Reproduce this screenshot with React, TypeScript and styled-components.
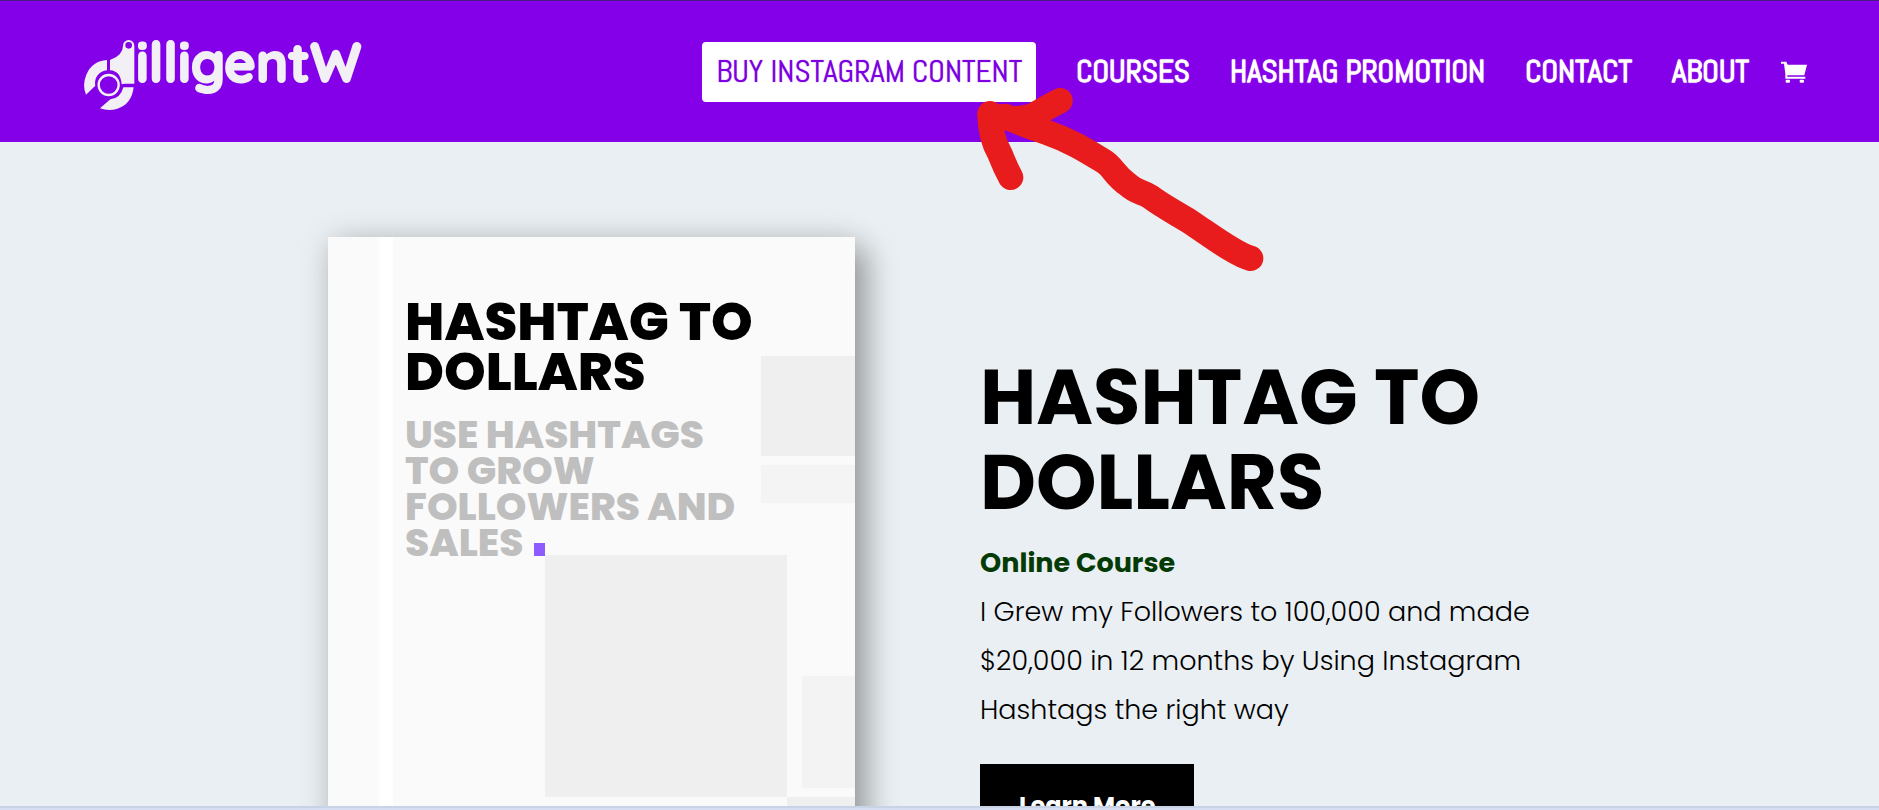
import React from 'react';
import styled, { createGlobalStyle } from 'styled-components';

const GlobalStyle = createGlobalStyle`
  * { box-sizing: border-box; }
  body {
    margin: 0;
    background: #e9eff2;
    color: #000;
    font-family: Poppins, Lato, sans-serif;
  }
  h1, h2, p { margin: 0; }
`;

const Page = styled.div`
  position: relative;
  display: flex;
  flex-direction: column;
  height: 100vh;
  overflow: hidden;
`;

const Header = styled.header`
  display: flex;
  flex: none;
  align-items: center;
  justify-content: space-between;
  padding: 41px 72px 40px 83px;
  background: #8300e9;
  border-top: 1px solid #4b1a86;
`;

const Logo = styled.a`
  display: flex;
  align-items: flex-start;
  gap: 1px;
  height: 60px;
  color: #f2f0f5;
  text-decoration: none;
`;

const LogoMark = styled.svg`
  flex: none;
  width: 52px;
  height: 72px;
  margin-top: -3px;
`;

const LogoName = styled.span`
  font: 700 54px/40px Quicksand, 'Varela Round', Lato, sans-serif;
  -webkit-text-stroke: 2px currentColor;
`;

const Nav = styled.nav`
  display: flex;
  align-items: center;
  gap: 40px;
`;

const NavLink = styled.a<{ $active?: boolean }>`
  padding: ${(p) => (p.$active ? '0 14px' : '0')};
  border-radius: 4px;
  background: ${(p) => (p.$active ? '#fff' : 'transparent')};
  color: ${(p) => (p.$active ? '#7d00df' : '#fff')};
  font-family: Abel, 'Roboto Condensed', sans-serif;
  font-size: 31px;
  font-weight: ${(p) => (p.$active ? 400 : 700)};
  line-height: 60px;
  text-decoration: none;
  text-shadow: 0 0 1px currentColor;
  white-space: nowrap;
`;

const CartLink = styled.a`
  display: flex;
  margin-left: -8px;
  color: #fff;
`;

const Hero = styled.main`
  display: grid;
  flex: 1;
  grid-template-columns: minmax(0, 527fr) minmax(0, 571fr);
  gap: 125px;
  align-items: start;
  width: 90%;
  max-width: 1223px;
  margin: 0 auto;
  padding-top: 95px;
`;

const Cover = styled.article`
  position: relative;
  min-height: 720px;
  padding: 60px 0 0 77px;
  background: #fafafa;
  box-shadow: 13px 13px 28px rgba(0, 0, 0, 0.3), 0 0 30px rgba(0, 0, 0, 0.12);
`;

const CoverArt = styled.svg`
  position: absolute;
  inset: 0;
  width: 100%;
  height: 720px;
`;

const CoverText = styled.div`
  position: relative;
  width: 360px;
`;

const CoverTitle = styled.h2`
  font-size: 53px;
  font-weight: 800;
  line-height: 50px;
  white-space: nowrap;
`;

const CoverSubtitle = styled.p`
  margin-top: 20px;
  color: #bfbfbf;
  font-size: 39px;
  font-weight: 800;
  line-height: 36px;
  white-space: nowrap;
`;

const Dot = styled.span`
  display: inline-block;
  width: 11px;
  height: 13px;
  margin-left: 11px;
  background: #8e5bff;
`;

const Intro = styled.section`
  padding-top: 118px;
`;

const Title = styled.h1`
  font-size: 77px;
  font-weight: 700;
  line-height: 85px;
`;

const Kicker = styled.p`
  margin-top: 13px;
  color: #043a04;
  font-size: 27px;
  font-weight: 700;
  line-height: 49px;
`;

const Lead = styled.p`
  font-size: 27px;
  font-weight: 300;
  line-height: 49px;
`;

const LearnMore = styled.button`
  margin-top: 30px;
  padding: 0 39px;
  border: 0;
  background: #000;
  color: #fff;
  font: 700 24px/84px Poppins, Lato, sans-serif;
`;

const BottomBar = styled.footer`
  position: absolute;
  inset: auto 0 0;
  height: 4px;
  background: #d6def4;
  border-top: 2px solid #c8d3e6;
`;

const Arrow = styled.svg`
  position: absolute;
  top: 70px;
  left: 960px;
  width: 320px;
  height: 210px;
  pointer-events: none;
`;

const links = ['COURSES', 'HASHTAG PROMOTION', 'CONTACT', 'ABOUT'];

export default function App() {
  return (
    <Page>
      <GlobalStyle />
      <Header>
        <Logo href="#" aria-label="dilligentW">
          <LogoMark viewBox="0 0 156 216" fill="currentColor" aria-hidden="true">
            <path d="M72 63 V94 A38 38 0 0 0 37 140 L9 167 Q-3 138 10 107 Q27 66 72 63Z" />
            <path
              fillRule="evenodd"
              d="M120 20 A17 17 0 0 1 154 20 V134 H125 L116 136 Q113 96 81 94 V63 Q120 49 120 20Z M137 9 A10 10 0 1 0 137 29 A10 10 0 1 0 137 9Z"
            />
            <circle cx="77" cy="138" r="30" fill="none" stroke="currentColor" strokeWidth="7" />
            <path d="M121 145 H152 Q146 196 103 209 Q77 217 51 208 L82 181 Q113 178 121 145Z" />
          </LogoMark>
          <LogoName>illigentW</LogoName>
        </Logo>
        <Nav>
          <NavLink href="#" $active>BUY INSTAGRAM CONTENT</NavLink>
          {links.map((l) => (
            <NavLink key={l} href="#">{l}</NavLink>
          ))}
          <CartLink href="#" aria-label="Cart">
            <svg width="26" height="22" viewBox="0 0 78 66" fill="currentColor">
              <path d="M0 2 H16 L20 11 H78 L70 43 H19 V47 H73 V53 H13 V38 L9 8 H0Z" />
              <rect x="14" y="56" width="13" height="9" rx="3" />
              <rect x="56" y="56" width="13" height="9" rx="3" />
            </svg>
          </CartLink>
        </Nav>
      </Header>
      <Hero>
        <Cover>
          <CoverArt viewBox="0 0 527 720" preserveAspectRatio="none" aria-hidden="true">
            <rect x="51" width="14" height="720" fill="#fff" />
            <rect x="433" y="119" width="94" height="100" fill="#efefef" />
            <rect x="433" y="228" width="94" height="38" fill="#f4f4f4" />
            <rect x="217" y="318" width="242" height="242" fill="#efefef" />
            <rect x="474" y="439" width="53" height="112" fill="#f3f3f3" />
            <rect x="459" y="560" width="68" height="160" fill="#efefef" />
          </CoverArt>
          <CoverText>
            <CoverTitle>HASHTAG TO<br />DOLLARS</CoverTitle>
            <CoverSubtitle>
              USE HASHTAGS<br />TO GROW<br />FOLLOWERS AND<br />SALES<Dot />
            </CoverSubtitle>
          </CoverText>
        </Cover>
        <Intro>
          <Title>HASHTAG TO DOLLARS</Title>
          <Kicker>Online Course</Kicker>
          <Lead>I Grew my Followers to 100,000 and made $20,000 in 12 months by Using Instagram Hashtags the right way</Lead>
          <LearnMore type="button">Learn More</LearnMore>
        </Intro>
      </Hero>
      <BottomBar />
      <Arrow viewBox="0 0 960 630" fill="none" stroke="#e81c1c" strokeLinecap="round" strokeLinejoin="round" strokeWidth="76" aria-hidden="true">
        <path d="M872 565 C830 555 760 502 690 455 C650 430 610 410 570 380 C545 364 530 368 505 345 C460 315 460 290 430 273 C370 236 330 212 260 187 C210 170 180 160 135 139" />
        <path d="M90 131 C90 175 96 210 120 252 Q135 290 152 322" />
        <path d="M90 135 C150 150 190 148 220 137 Q250 118 300 92" />
      </Arrow>
    </Page>
  );
}
